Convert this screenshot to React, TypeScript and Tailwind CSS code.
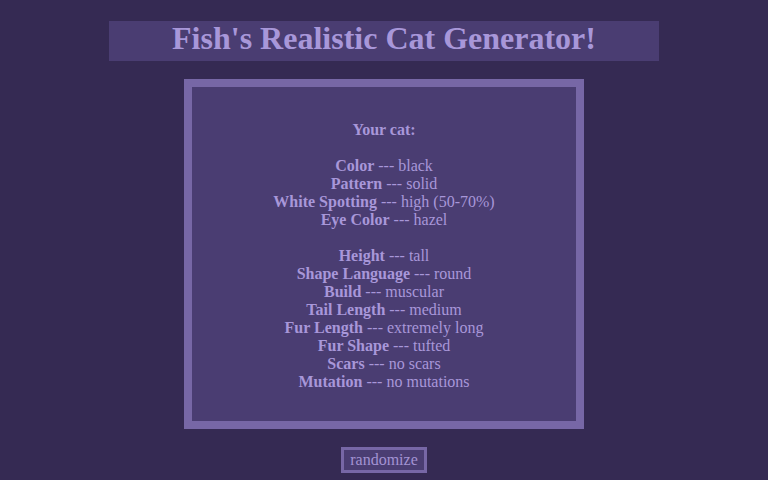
import { useState } from "react";

type Trait = [string, string];

const looks: Trait[] = [
  ["Color", "black"],
  ["Pattern", "solid"],
  ["White Spotting", "high (50-70%)"],
  ["Eye Color", "hazel"],
];

const body: Trait[] = [
  ["Height", "tall"],
  ["Shape Language", "round"],
  ["Build", "muscular"],
  ["Tail Length", "medium"],
  ["Fur Length", "extremely long"],
  ["Fur Shape", "tufted"],
  ["Scars", "no scars"],
  ["Mutation", "no mutations"],
];

function TraitList({ traits }: { traits: Trait[] }) {
  return (
    <div>
      {traits.map(([name, value]) => (
        <div key={name}>
          <b>{name}</b> --- {value}
        </div>
      ))}
    </div>
  );
}

export default function App() {
  const [rolls, setRolls] = useState(0);

  return (
    <div className="min-h-screen bg-[#352a53] pt-[21px] font-['Liberation_Serif',serif] text-[16px] leading-[18px] text-[#a897d9]">
      <h1 className="mx-auto flex h-[40px] w-[550px] items-center justify-center bg-[#4a3d72] pb-[6px] text-[32px] font-bold leading-none">
        Fish's Realistic Cat Generator!
      </h1>
      <div className="mx-auto mt-[18px] w-[400px] border-[8px] border-[#7767a6] bg-[#4a3d72] pt-[34px] pb-[30px] text-center">
        <div className="font-bold">Your cat:</div>
        <div className="h-[18px]" />
        <TraitList traits={looks} />
        <div className="h-[18px]" />
        <TraitList traits={body} />
      </div>
      <div className="mt-[18px] flex justify-center">
        <button
          type="button"
          onClick={() => setRolls(rolls + 1)}
          className="h-[26px] border-[3px] border-[#7767a6] bg-[#4a3d72] px-[6px] leading-[18px] text-[#a393d3]"
        >
          randomize
        </button>
      </div>
    </div>
  );
}
